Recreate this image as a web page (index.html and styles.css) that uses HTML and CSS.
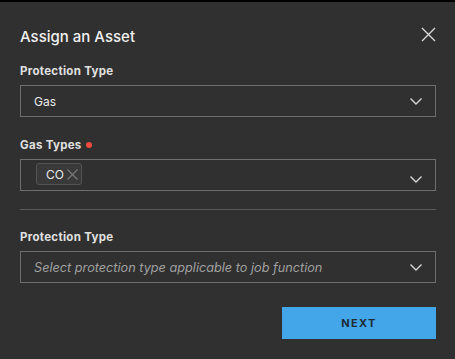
FILE: index.html
```html
<!DOCTYPE html>
<html>
<head>
<meta charset="utf-8">
<link rel="stylesheet" href="styles.css">
</head>
<body>
<div class="modal">
  <div class="header">
    <h1 class="title">Assign an Asset</h1>
    <svg class="close" width="15" height="15" viewBox="0 0 15 15"><path d="M1 1L14 14M14 1L1 14" stroke="#d8d8d8" stroke-width="1.4" fill="none"/></svg>
  </div>
  <div class="field">
    <div class="label">Protection Type</div>
    <div class="select">
      <span class="value">Gas</span>
      <svg class="chev" width="12" height="7" viewBox="0 0 12 7"><path d="M0.5 0.5L6 6L11.5 0.5" stroke="#d8d8d8" stroke-width="1.4" fill="none"/></svg>
    </div>
  </div>
  <div class="field gas">
    <div class="label">Gas Types <span class="dot"></span></div>
    <div class="select multi">
      <span class="chip">CO <svg width="11" height="11" viewBox="0 0 11 11"><path d="M0.5 0.5L10.5 10.5M10.5 0.5L0.5 10.5" stroke="#7a7a7a" stroke-width="1.1" fill="none"/></svg></span>
      <svg class="chev low" width="12" height="7" viewBox="0 0 12 7"><path d="M0.5 0.5L6 6L11.5 0.5" stroke="#d8d8d8" stroke-width="1.4" fill="none"/></svg>
    </div>
  </div>
  <div class="divider"></div>
  <div class="field second">
    <div class="label">Protection Type</div>
    <div class="select">
      <span class="placeholder">Select protection type applicable to job function</span>
      <svg class="chev" width="12" height="7" viewBox="0 0 12 7"><path d="M0.5 0.5L6 6L11.5 0.5" stroke="#d8d8d8" stroke-width="1.4" fill="none"/></svg>
    </div>
  </div>
  <div class="actions">
    <button class="next">NEXT</button>
  </div>
</div>
</body>
</html>
```
FILE: styles.css
```css
html, body {
  margin: 0;
  padding: 0;
  background: #303030;
}
body {
  border-top: 2px solid #000;
  font-family: Inter, "Noto Sans", sans-serif;
  color: #e6e6e6;
  width: 455px;
  height: 357px;
  overflow: hidden;
}
.modal {
  padding: 0 19px 0 20px;
}
.header {
  display: flex;
  justify-content: space-between;
  align-items: center;
  height: 40px;
  margin-top: 14px;
}
.title {
  margin: 0;
  font-size: 15px;
  font-weight: 500;
  color: #f0f0f0;
}
.close {
  margin-top: -4px;
}
.field {
  margin-top: 8px;
}
.label {
  font-size: 11.5px;
  font-weight: 700;
  letter-spacing: 0.3px;
  color: #e0e0e0;
  height: 14px;
  line-height: 14px;
  margin-bottom: 7px;
  display: flex;
  align-items: center;
  gap: 4px;
}
.dot {
  width: 6px;
  height: 6px;
  border-radius: 50%;
  background: #ee4b40;
  display: inline-block;
}
.select {
  height: 30px;
  border: 1px solid #6e6e6e;
  display: flex;
  align-items: center;
  justify-content: space-between;
  padding: 0 13px;
}
.value {
  font-size: 12px;
  color: #ececec;
}
.gas {
  margin-top: 21px;
}
.multi {
  padding-left: 15px;
  align-items: flex-start;
}
.chip {
  margin-top: 3px;
  height: 20px;
  border: 1px solid #545454;
  background: #393939;
  border-radius: 3px;
  display: flex;
  align-items: center;
  gap: 3px;
  padding: 0 3px 0 9px;
  font-size: 12px;
  color: #e8e8e8;
}
.chev.low {
  margin-top: 16px;
}
.divider {
  height: 1px;
  background: #5a5a5a;
  margin-top: 18px;
}
.second {
  margin-top: 20px;
}
.placeholder {
  font-size: 12.7px;
  font-style: italic;
  color: #a0a0a0;
}
.actions {
  display: flex;
  justify-content: flex-end;
  margin-top: 24px;
}
.next {
  width: 154px;
  height: 32px;
  background: #42a6e8;
  border: none;
  color: #1e2b36;
  font-family: Inter, sans-serif;
  font-weight: 700;
  font-size: 11px;
  letter-spacing: 1.3px;
}
```
